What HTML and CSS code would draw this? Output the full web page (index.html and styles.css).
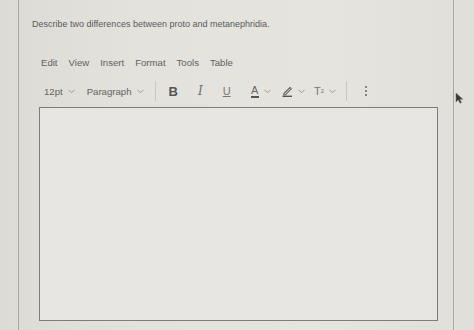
FILE: index.html
```html
<!DOCTYPE html>
<html>
<head>
<meta charset="utf-8">
<link rel="stylesheet" href="styles.css">
</head>
<body>
<div class="page">
  <div class="panel">
    <p class="question">Describe two differences between proto and metanephridia.</p>
    <div class="menubar">
      <span class="m-edit">Edit</span>
      <span class="m-view">View</span>
      <span class="m-insert">Insert</span>
      <span class="m-format">Format</span>
      <span class="m-tools">Tools</span>
      <span class="m-table">Table</span>
    </div>
    <div class="toolbar">
      <span class="tb-item tb-size">12pt<svg class="chev" width="7" height="5" viewBox="0 0 7 5"><path d="M0.5 0.8 L3.5 3.8 L6.5 0.8" fill="none" stroke="#9a9a9a" stroke-width="1"/></svg></span>
      <span class="tb-item tb-para">Paragraph<svg class="chev" width="7" height="5" viewBox="0 0 7 5"><path d="M0.5 0.8 L3.5 3.8 L6.5 0.8" fill="none" stroke="#9a9a9a" stroke-width="1"/></svg></span>
      <span class="sep"></span>
      <span class="tb-btn tb-bold">B</span>
      <span class="tb-btn tb-italic">I</span>
      <span class="tb-btn tb-under">U</span>
      <span class="tb-btn tb-color"><span class="a-glyph">A</span><svg class="chev" width="7" height="5" viewBox="0 0 7 5"><path d="M0.5 0.8 L3.5 3.8 L6.5 0.8" fill="none" stroke="#9a9a9a" stroke-width="1"/></svg></span>
      <span class="tb-btn tb-hl"><svg width="11" height="12" viewBox="0 0 11 12"><path d="M2 8.5 L8 2.5 L9.3 3.8 L3.3 9.8 L1.6 10 Z" fill="none" stroke="#666" stroke-width="1.1" stroke-linejoin="round"/><rect x="0.5" y="10.6" width="9.5" height="1.4" fill="#555"/></svg><svg class="chev" width="7" height="5" viewBox="0 0 7 5"><path d="M0.5 0.8 L3.5 3.8 L6.5 0.8" fill="none" stroke="#9a9a9a" stroke-width="1"/></svg></span>
      <span class="tb-btn tb-sup">T<sup>2</sup><svg class="chev" width="7" height="5" viewBox="0 0 7 5"><path d="M0.5 0.8 L3.5 3.8 L6.5 0.8" fill="none" stroke="#9a9a9a" stroke-width="1"/></svg></span>
      <span class="sep sep2"></span>
      <span class="tb-more"><i></i><i></i><i></i></span>
    </div>
    <div class="editor"></div>
  </div>
  <svg class="cursor" width="9" height="12" viewBox="0 0 9 12"><path d="M1 1 L1 10 L3.3 7.8 L5 11.2 L6.4 10.5 L4.8 7.2 L7.8 7.2 Z" fill="#3a3a3a" stroke="#666" stroke-width="0.5"/></svg>
</div>
</body>
</html>
```
FILE: styles.css
```css
html, body {
  margin: 0;
  padding: 0;
  background: #e2e0db;
}
body {
  width: 474px;
  height: 330px;
  overflow: hidden;
  font-family: "Liberation Sans", Arial, sans-serif;
  color: #5c5c5c;
}
.page {
  position: relative;
  height: 330px;
  padding-left: 18px;
  background: linear-gradient(90deg, #dddbd6 0%, #e4e2dd 30%, #e6e4df 70%, #e1dfda 100%);
}
.panel {
  width: 436px;
  height: 330px;
  box-sizing: border-box;
  border-left: 1px solid #a9a8a4;
  border-right: 1px solid #a9a8a4;
  display: flex;
  flex-direction: column;
}
.question {
  margin: 18px 0 0 13px;
  font-size: 9px;
  line-height: 12px;
  color: #5a5a5a;
}
.menubar {
  margin-top: 27px;
  height: 12px;
  padding-left: 22px;
  display: flex;
  font-size: 9.6px;
  line-height: 12px;
  color: #626262;
}
.menubar span { margin-right: 11px; }
.toolbar {
  margin-top: 11px;
  height: 22px;
  padding-left: 25px;
  display: flex;
  align-items: center;
  font-size: 9.6px;
  color: #646464;
}
.tb-item {
  display: flex;
  align-items: center;
}
.chev { margin-left: 5px; }
.tb-para { margin-left: 12px; }
.sep {
  width: 1px;
  height: 20px;
  background: #c9c7c2;
  margin-left: 11px;
}
.tb-btn {
  display: flex;
  align-items: center;
}
.tb-bold {
  margin-left: 13px;
  font-size: 13px;
  font-weight: bold;
  color: #555;
}
.tb-italic {
  margin-left: 20px;
  font-family: "DejaVu Serif", serif;
  font-style: italic;
  font-size: 12px;
  color: #707070;
}
.tb-under {
  margin-left: 20px;
  font-size: 11px;
  color: #777;
  text-decoration: underline;
  text-underline-offset: 1px;
}
.tb-color { margin-left: 20px; }
.a-glyph {
  font-size: 11px;
  color: #666;
  line-height: 11px;
  border-bottom: 2px solid #555;
  padding: 0 0.5px;
}
.tb-hl { margin-left: 11px; }
.tb-sup {
  margin-left: 9px;
  font-size: 11px;
  color: #777;
}
.tb-sup sup {
  font-size: 6px;
  vertical-align: 5px;
}
.sep2 { margin-left: 10px; }
.tb-more {
  margin-left: 18px;
  display: flex;
  flex-direction: column;
  gap: 2px;
}
.tb-more i {
  width: 2px;
  height: 2px;
  border-radius: 50%;
  background: #666;
}
.editor {
  margin: 5px 0 0 20px;
  width: 399px;
  height: 214px;
  box-sizing: border-box;
  border: 1px solid #7c7c7a;
  background: #e7e6e2;
}
.cursor {
  position: absolute;
  left: 455px;
  top: 92px;
}
```
